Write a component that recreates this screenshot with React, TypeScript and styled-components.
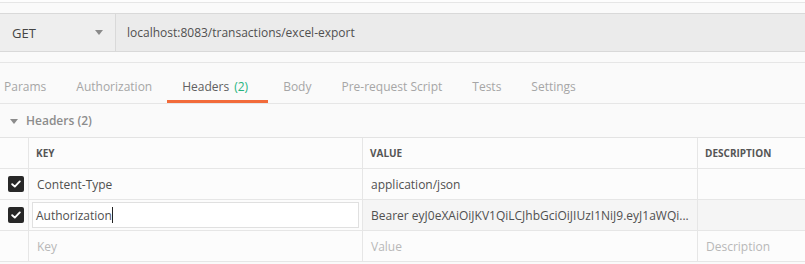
import styled, { createGlobalStyle } from "styled-components";

type HeaderRow = {
  key: string;
  value: string;
  description?: string;
  editing?: boolean;
};

const headers: HeaderRow[] = [
  { key: "Content-Type", value: "application/json" },
  {
    key: "Authorization",
    value: "Bearer eyJ0eXAiOiJKV1QiLCJhbGciOiJIUzI1NiJ9.eyJ1aWQi...",
    editing: true,
  },
];

const tabs = [
  "Params",
  "Authorization",
  "Headers",
  "Body",
  "Pre-request Script",
  "Tests",
  "Settings",
];

const GlobalStyle = createGlobalStyle`
  body {
    margin: 0;
    background: #fafafa;
    font-family: "Open Sans", "Liberation Sans", sans-serif;
    color: #505050;
    overflow: hidden;
  }
`;

const Page = styled.div`
  width: 805px;
  height: 264px;
  overflow: hidden;
`;

const TopRule = styled.div`
  height: 2px;
  background: #fdfdfd;
  border-bottom: 1px solid #e6e6e6;
`;

const UrlBar = styled.div`
  display: flex;
  height: 37px;
  margin-top: 10px;
  border-top: 1px solid #d9d9d9;
  border-bottom: 1px solid #d9d9d9;
  background: #ebebeb;
`;

const Method = styled.div`
  width: 103px;
  padding-left: 12px;
  display: flex;
  align-items: center;
  justify-content: space-between;
  border-right: 1px solid #d9d9d9;
  background: #eeeeee;
  font-size: 13px;
  color: #444;
`;

const Caret = styled.span`
  width: 0;
  height: 0;
  margin-right: 12px;
  border-left: 4px solid transparent;
  border-right: 4px solid transparent;
  border-top: 5px solid #8a8a8a;
`;

const UrlText = styled.div`
  display: flex;
  align-items: center;
  padding-left: 11px;
  font-size: 12px;
  color: #505050;
`;

const Tabs = styled.div`
  display: flex;
  margin-top: 10px;
  margin-left: -11px;
  height: 40px;
  border-top: 1px solid #e6e6e6;
  border-bottom: 1px solid #e6e6e6;
`;

const Tab = styled.div<{ $active?: boolean }>`
  display: flex;
  align-items: center;
  padding: 9px 15px 0 15px;
  font-size: 12px;
  color: ${(p) => (p.$active ? "#606060" : "#a6a6a6")};
  border-bottom: 3px solid ${(p) => (p.$active ? "#f26b3a" : "transparent")};
`;

const Count = styled.span`
  margin-left: 5px;
  margin-right: 5px;
  color: #26b47f;
`;

const Section = styled.div`
  display: flex;
  align-items: center;
  gap: 8px;
  height: 33px;
  padding-left: 10px;
  font-size: 12px;
  font-weight: 600;
  color: #8c8c8c;
`;

const Triangle = styled.span`
  width: 0;
  height: 0;
  margin-top: 1px;
  border-left: 4px solid transparent;
  border-right: 4px solid transparent;
  border-top: 5px solid #8c8c8c;
`;

const Table = styled.div`
  display: grid;
  grid-template-columns: 29px 334px 335px 1fr;
  border-top: 1px solid #e3e3e3;
  background: #fcfcfc;
`;

const Cell = styled.div<{ $shade?: boolean; $head?: boolean; $first?: boolean }>`
  display: flex;
  align-items: center;
  height: 30px;
  padding-left: ${(p) => (p.$first ? "0" : p.$head ? "7px" : "8px")};
  justify-content: ${(p) => (p.$first ? "center" : "flex-start")};
  border-bottom: 1px solid #e6e6e6;
  border-right: 1px solid #e6e6e6;
  background: ${(p) => (p.$shade ? "#f5f5f5" : "#fcfcfc")};
  font-size: ${(p) => (p.$head ? "10px" : "12px")};
  font-weight: ${(p) => (p.$head ? 700 : 400)};
  color: ${(p) => (p.$head ? "#555" : "#505050")};
  white-space: nowrap;
  overflow: hidden;
  &:nth-child(4n) {
    border-right: none;
  }
`;

const Placeholder = styled.span`
  color: #b8b8b8;
`;

const EditBox = styled.div`
  flex: 1;
  display: flex;
  align-items: center;
  height: 24px;
  margin: 0 3px 0 -5px;
  padding-left: 3px;
  border: 1px solid #e0e0e0;
  background: #ffffff;
`;

const Cursor = styled.span`
  display: inline-block;
  width: 1px;
  height: 16px;
  background: #222;
`;

const CheckBox = styled.span`
  display: flex;
  align-items: center;
  justify-content: center;
  width: 16px;
  height: 16px;
  margin-left: 4px;
  border-radius: 2px;
  background: #282828;
`;

const Check = () => (
  <CheckBox>
    <svg width="10" height="8" viewBox="0 0 10 8">
      <path
        d="M1.2 4.2 L3.8 6.6 L8.8 1.4"
        fill="none"
        stroke="#fff"
        strokeWidth="1.9"
        strokeLinecap="round"
        strokeLinejoin="round"
      />
    </svg>
  </CheckBox>
);

const App = () => {
  return (
    <Page>
      <GlobalStyle />
      <TopRule />
      <UrlBar>
        <Method>
          GET
          <Caret />
        </Method>
        <UrlText>localhost:8083/transactions/excel-export</UrlText>
      </UrlBar>
      <Tabs>
        {tabs.map((t) => (
          <Tab key={t} $active={t === "Headers"}>
            {t}
            {t === "Headers" && <Count>(2)</Count>}
          </Tab>
        ))}
      </Tabs>
      <Section>
        <Triangle />
        Headers (2)
      </Section>
      <Table>
        <Cell $head $first />
        <Cell $head>KEY</Cell>
        <Cell $head>VALUE</Cell>
        <Cell $head>DESCRIPTION</Cell>
        {headers.map((h) => (
          <>
            <Cell $first key={h.key + "c"}>
              <Check />
            </Cell>
            <Cell key={h.key + "k"}>
              {h.editing ? (
                <EditBox>
                  {h.key}
                  <Cursor />
                </EditBox>
              ) : (
                h.key
              )}
            </Cell>
            <Cell key={h.key + "v"} $shade={h.editing}>
              {h.value}
            </Cell>
            <Cell key={h.key + "d"} $shade={h.editing}>
              {h.description}
            </Cell>
          </>
        ))}
        <Cell $first />
        <Cell>
          <Placeholder>Key</Placeholder>
        </Cell>
        <Cell>
          <Placeholder>Value</Placeholder>
        </Cell>
        <Cell>
          <Placeholder>Description</Placeholder>
        </Cell>
      </Table>
    </Page>
  );
};

export default App;
